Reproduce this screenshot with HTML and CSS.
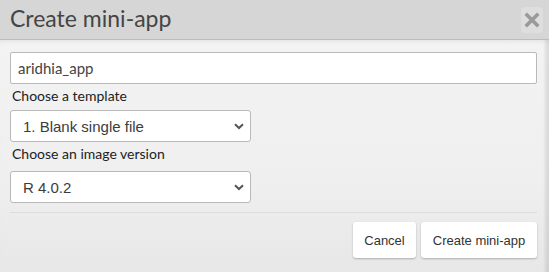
FILE: index.html
```html
<!DOCTYPE html>
<html>
<head>
<meta charset="utf-8">
<link rel="stylesheet" href="styles.css">
</head>
<body>
<div class="dialog">
  <div class="header">
    <h1 class="title">Create mini-app</h1>
    <button class="close" aria-label="Close">
      <svg width="16" height="16" viewBox="0 0 16 16"><path d="M3 3 L13 13 M13 3 L3 13" stroke="#9a9a9a" stroke-width="3.6" stroke-linecap="square"/></svg>
    </button>
  </div>
  <div class="body">
    <div class="form">
      <input class="text-input" type="text" value="aridhia_app">
      <label class="label">Choose a template</label>
      <div class="select">
        <span>1. Blank single file</span>
        <svg class="chev" width="10" height="7" viewBox="0 0 10 7"><path d="M1 1.2 L5 5 L9 1.2" fill="none" stroke="#555" stroke-width="2"/></svg>
      </div>
      <label class="label label-second">Choose an image version</label>
      <div class="select">
        <span>R 4.0.2</span>
        <svg class="chev" width="10" height="7" viewBox="0 0 10 7"><path d="M1 1.2 L5 5 L9 1.2" fill="none" stroke="#555" stroke-width="2"/></svg>
      </div>
    </div>
    <div class="footer">
      <button class="btn">Cancel</button>
      <button class="btn">Create mini-app</button>
    </div>
  </div>
</div>
</body>
</html>
```
FILE: styles.css
```css
html, body {
  margin: 0;
  padding: 0;
}
body {
  width: 549px;
  height: 272px;
  overflow: hidden;
  font-family: Lato, "Liberation Sans", sans-serif;
}
.dialog {
  width: 549px;
  height: 272px;
  display: flex;
  flex-direction: column;
  background: #e9e9e9;
}
.header {
  height: 39px;
  border-bottom: 1px solid #bcbcbc;
  background: #d6d6d6;
  display: flex;
  align-items: center;
  justify-content: space-between;
  padding: 0 6px 0 10px;
  flex-shrink: 0;
}
.title {
  margin: 0;
  font-family: Lato, sans-serif;
  font-weight: 400;
  font-size: 23px;
  color: #454545;
  line-height: 1;
  position: relative;
  top: -1px;
}
.close {
  width: 22px;
  height: 26px;
  border: none;
  border-radius: 4px;
  background: #dedede;
  padding: 0;
  display: flex;
  align-items: center;
  justify-content: center;
}
.body {
  flex: 1;
  padding: 0 12px 0 10px;
  background:
    linear-gradient(to right, rgba(0,0,0,0) 0, rgba(0,0,0,0) 543px, rgba(0,0,0,0.07) 546px, rgba(0,0,0,0.1) 549px),
    linear-gradient(to bottom, #f3f3f3 0, #efefef 60%, #e7e7e7 100%);
  box-shadow: inset 0 4px 5px -3px rgba(0,0,0,0.08);
}
.form {
  padding-top: 12px;
  padding-bottom: 9px;
  border-bottom: 1px solid #dcdcdc;
  display: flex;
  flex-direction: column;
  align-items: flex-start;
}
.text-input {
  box-sizing: border-box;
  width: 527px;
  height: 32px;
  margin: 0;
  border: 1px solid #b9b9b9;
  border-radius: 2px;
  background: #fff;
  padding: 0 7px;
  font-family: Lato, sans-serif;
  font-size: 15px;
  color: #444;
  outline: none;
}
.label {
  font-family: Lato, sans-serif;
  font-size: 14px;
  color: #222;
  line-height: 18px;
  margin: 3px 0 5px 2px;
}
.label-second {
  margin-bottom: 8px;
}
.select {
  box-sizing: border-box;
  width: 241px;
  height: 32px;
  border: 1px solid #b9b9b9;
  border-radius: 3px;
  background: #fff;
  display: flex;
  align-items: center;
  justify-content: space-between;
  padding: 0 6px 0 12px;
  font-family: "Liberation Sans", Arial, sans-serif;
  font-size: 15px;
  color: #3c3c3c;
}
.chev {
  display: block;
}
.footer {
  display: flex;
  justify-content: flex-end;
  gap: 5px;
  padding-top: 9px;
}
.btn {
  height: 36px;
  border: none;
  border-radius: 3px;
  background: #fff;
  box-shadow: 0 1px 2px rgba(0,0,0,0.25);
  font-family: "Liberation Sans", Arial, sans-serif;
  font-size: 13px;
  color: #333;
  padding: 0 11px;
}
.btn:first-child {
  width: 63px;
}
.btn:last-child {
  width: 116px;
}
```
